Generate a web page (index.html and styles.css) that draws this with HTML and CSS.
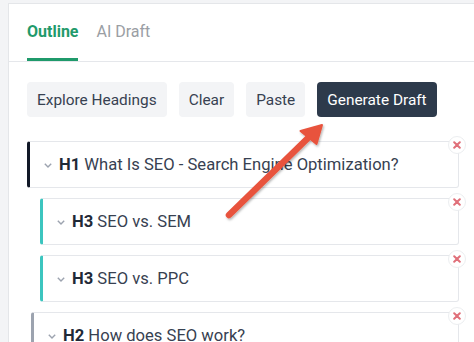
FILE: index.html
```html
<!DOCTYPE html>
<html lang="en">
<head>
    <meta charset="UTF-8">
    <meta name="viewport" content="width=device-width, initial-scale=1.0">
    <title>Outline</title>
    <link rel="stylesheet" href="styles.css">
</head>
<body>
    <div class="panel">
        <nav class="tabs">
            <span class="tab active">Outline</span>
            <span class="tab">AI Draft</span>
        </nav>
        <div class="content">
            <div class="actions">
                <button class="btn">Explore Headings</button>
                <button class="btn">Clear</button>
                <button class="btn">Paste</button>
                <button class="btn dark">Generate Draft</button>
            </div>
            <ul class="outline">
                <li class="heading h1">
                    <svg class="chev" width="8" height="5" viewBox="0 0 8 5"><path d="M0.8 0.8L4 4L7.2 0.8" fill="none" stroke="#9ca3af" stroke-width="1.4"/></svg>
                    <span class="label"><b>H1</b> What Is SEO - Search Engine Optimization?</span>
                    <span class="remove"><svg width="8" height="8" viewBox="0 0 8 8"><path d="M1.2 1.2L6.8 6.8M6.8 1.2L1.2 6.8" stroke="#e0707a" stroke-width="2" stroke-linecap="round"/></svg></span>
                </li>
                <li class="heading h3">
                    <svg class="chev" width="8" height="5" viewBox="0 0 8 5"><path d="M0.8 0.8L4 4L7.2 0.8" fill="none" stroke="#9ca3af" stroke-width="1.4"/></svg>
                    <span class="label"><b>H3</b> SEO vs. SEM</span>
                    <span class="remove"><svg width="8" height="8" viewBox="0 0 8 8"><path d="M1.2 1.2L6.8 6.8M6.8 1.2L1.2 6.8" stroke="#e0707a" stroke-width="2" stroke-linecap="round"/></svg></span>
                </li>
                <li class="heading h3">
                    <svg class="chev" width="8" height="5" viewBox="0 0 8 5"><path d="M0.8 0.8L4 4L7.2 0.8" fill="none" stroke="#9ca3af" stroke-width="1.4"/></svg>
                    <span class="label"><b>H3</b> SEO vs. PPC</span>
                    <span class="remove"><svg width="8" height="8" viewBox="0 0 8 8"><path d="M1.2 1.2L6.8 6.8M6.8 1.2L1.2 6.8" stroke="#e0707a" stroke-width="2" stroke-linecap="round"/></svg></span>
                </li>
                <li class="heading h2">
                    <svg class="chev" width="8" height="5" viewBox="0 0 8 5"><path d="M0.8 0.8L4 4L7.2 0.8" fill="none" stroke="#9ca3af" stroke-width="1.4"/></svg>
                    <span class="label"><b>H2</b> How does SEO work?</span>
                    <span class="remove"><svg width="8" height="8" viewBox="0 0 8 8"><path d="M1.2 1.2L6.8 6.8M6.8 1.2L1.2 6.8" stroke="#e0707a" stroke-width="2" stroke-linecap="round"/></svg></span>
                </li>
            </ul>
        </div>
    </div>

    <!-- annotation arrow pointing at the Generate Draft button -->
    <svg class="arrow" width="474" height="342" viewBox="0 0 474 342">
        <defs>
            <filter id="shade" x="-20%" y="-20%" width="140%" height="140%">
                <feDropShadow dx="1" dy="1.5" stdDeviation="1.2" flood-color="#000" flood-opacity="0.3"/>
            </filter>
        </defs>
        <g filter="url(#shade)" fill="#e8533d" stroke="#e8533d">
            <line x1="229" y1="215" x2="308" y2="138" stroke-width="6.5" stroke-linecap="round"/>
            <polygon points="322,125 316.5,144 300.5,131" stroke-width="2" stroke-linejoin="round"/>
        </g>
    </svg>
</body>
</html>
```

FILE: styles.css
```css
body {
    margin: 0;
    position: relative;
    height: 342px;
    overflow: hidden;
    background: #f3f4f6;
    font-family: Roboto, "Liberation Sans", sans-serif;
    color: #374151;
}

.panel {
    margin: 3px 0 0 8px;
    height: 339px;
    background: #fff;
    border-top: 1px solid #e4e6e9;
    border-left: 1px solid #e4e6e9;
}

.tabs {
    display: flex;
    gap: 18px;
    padding-left: 18px;
    border-bottom: 1px solid #e5e7eb;
}
.tab {
    font-size: 16px;
    line-height: 20px;
    padding: 18px 0 16px;
    border-bottom: 3px solid transparent;
    color: #9a9ea4;
}
.tab.active {
    color: #1f9a6b;
    font-weight: 700;
    border-bottom-color: #1f9a6b;
}

.content {
    padding: 20px 0 0 18px;
    width: 432px;
}

.actions {
    display: flex;
    gap: 12px;
}
.btn {
    font: 15.4px Roboto, "Liberation Sans", sans-serif;
    height: 35px;
    padding: 0 10px;
    border: 0;
    border-radius: 4px;
    background: #f3f4f6;
    color: #374151;
}
.btn.dark {
    background: #2d3a4b;
    color: #fff;
}

.outline {
    list-style: none;
    margin: 24px 0 0;
    padding: 0;
    display: flex;
    flex-direction: column;
    gap: 10px;
}
.heading {
    position: relative;
    display: flex;
    align-items: center;
    gap: 7px;
    height: 47px;
    box-sizing: border-box;
    padding: 0 14px;
    border: 1px solid #e5e7eb;
    border-left: 3px solid;
    border-radius: 3px;
    font-size: 16.6px;
}
.heading b {
    color: #1f2937;
}
.h1 { border-left-color: #111827; }
.h2 { border-left-color: #9ca3af; margin-left: 4px; }
.h3 { border-left-color: #3cc5bf; margin-left: 13px; }

.chev {
    flex: none;
    margin-top: 2px;
}

.remove {
    position: absolute;
    top: -6px;
    right: -8px;
    width: 18px;
    height: 18px;
    box-sizing: border-box;
    border: 1px solid #eceef0;
    border-radius: 50%;
    background: #fff;
    display: flex;
    align-items: center;
    justify-content: center;
}

.arrow {
    position: absolute;
    left: 0;
    top: 0;
    pointer-events: none;
}
```
